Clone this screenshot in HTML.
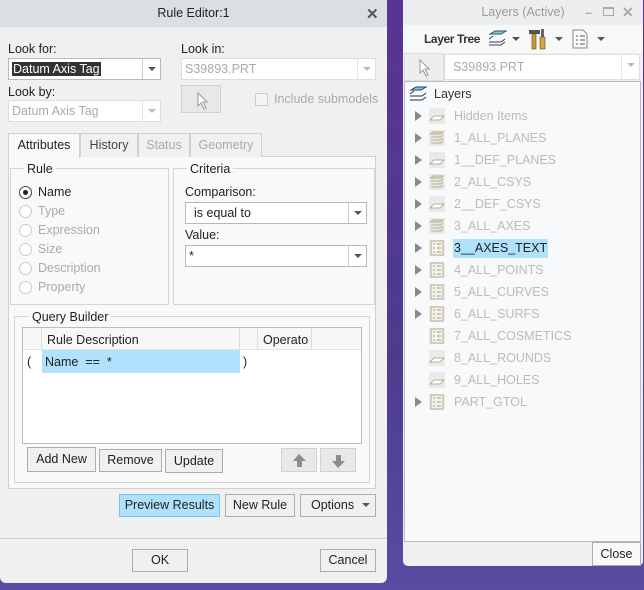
<!DOCTYPE html>
<html><head><meta charset="utf-8"><style>
*{box-sizing:border-box;margin:0;padding:0}
body{width:644px;height:590px;overflow:hidden;position:relative;font-family:"Liberation Sans",sans-serif;font-size:12px;color:#222;background:linear-gradient(180deg,#5a3494 0%,#4d3c8e 60%,#5a4ba2 100%)}
.a{position:absolute;white-space:nowrap}
.dlg{left:0;top:0;width:387px;height:583px;background:#f0f0f0;border-radius:0 0 6px 6px}
.tb{left:0;top:0;width:387px;height:27px;background:#dcdfe1;text-align:center;line-height:27px;font-size:12.5px}
.lbl{font-size:12.5px}
.combo{background:#fff;border:1px solid #b8b8b8;height:22px;line-height:20px;padding-left:3px;font-size:12.5px}
.combo.dis{color:#aaa;border-color:#ddd}
.dd{position:absolute;right:0;top:0;width:18px;height:100%;border-left:1px solid #ccc}
.dd:after{content:"";position:absolute;left:5px;top:8px;border:4px solid transparent;border-top:4px solid #555}
.dis .dd{border-left-color:#e5e5e5}.dis .dd:after{border-top-color:#bbb}
.btn{background:#f0f0f0;border:1px solid #adadad;text-align:center;font-size:12.5px}
.grp{border:1px solid #d5d5d5}
.leg{background:#f9f9f9;padding:0 3px;font-size:12.5px}
.rad{width:13px;height:13px;border-radius:50%;border:1px solid #ccc;background:#fff}
.rt{font-size:12.5px;color:#aaa}
.tab{top:133px;height:24px;border:1px solid #d0d0d0;border-bottom:none;text-align:center;line-height:23px;font-size:12.5px;background:#f0f0f0}
.row{left:410px;width:220px;height:22px;line-height:22px;font-size:12.5px;color:#bbb}
.tri{position:absolute;left:5px;top:6px;border:5px solid transparent;border-left:7px solid #888}
.ic{position:absolute;left:19px;top:3px;width:16px;height:16px;background:#eaeaea}
.tx{position:absolute;left:44px;top:0}
</style></head><body>
<div class="a dlg"></div>
<div class="a tb">Rule Editor:1</div>
<div class="a" style="left:366px;top:5px;font-size:15px;font-weight:bold;color:#555">✕</div>

<div class="a lbl" style="left:8px;top:42px">Look for:</div>
<div class="a combo" style="left:8px;top:58px;width:153px"><span style="background:#333;color:#fff;padding:0 1px">Datum Axis Tag</span><div class="dd"></div></div>
<div class="a lbl" style="left:181px;top:42px">Look in:</div>
<div class="a combo dis" style="left:181px;top:58px;width:195px">S39893.PRT<div class="dd"></div></div>
<div class="a lbl" style="left:8px;top:85px">Look by:</div>
<div class="a combo dis" style="left:8px;top:100px;width:153px">Datum Axis Tag<div class="dd"></div></div>
<div class="a" style="left:181px;top:85px;width:40px;height:28px;background:#e8e8e8;border:1px solid #d0d0d0"><svg width="40" height="28"><path d="M16 7 L16 20 L19 17 L22 23 L24 22 L21 16 L25 16 Z" fill="#fff" stroke="#999"/></svg></div>
<div class="a" style="left:255px;top:93px;width:13px;height:13px;border:1px solid #ccc;background:#f5f5f5"></div>
<div class="a rt" style="left:274px;top:92px">Include submodels</div>

<div class="a" style="left:8px;top:156px;width:368px;height:333px;background:#f9f9f9;border:1px solid #d0d0d0"></div>
<div class="a tab" style="left:8px;width:72px;height:25px;background:#f9f9f9;color:#222">Attributes</div>
<div class="a tab" style="left:80px;width:58px;color:#444">History</div>
<div class="a tab" style="left:138px;width:52px;color:#aaa">Status</div>
<div class="a tab" style="left:190px;width:72px;color:#aaa">Geometry</div>

<div class="a grp" style="left:10px;top:168px;width:159px;height:137px"></div>
<div class="a leg" style="left:24px;top:162px">Rule</div>
<div class="a rad" style="left:19px;top:186px;border-color:#444"><div style="width:5px;height:5px;background:#222;border-radius:50%;margin:3px"></div></div>
<div class="a lbl" style="left:38px;top:185px">Name</div>
<div class="a rad" style="left:19px;top:205px"></div><div class="a rt" style="left:38px;top:204px">Type</div>
<div class="a rad" style="left:19px;top:224px"></div><div class="a rt" style="left:38px;top:223px">Expression</div>
<div class="a rad" style="left:19px;top:243px"></div><div class="a rt" style="left:38px;top:242px">Size</div>
<div class="a rad" style="left:19px;top:262px"></div><div class="a rt" style="left:38px;top:261px">Description</div>
<div class="a rad" style="left:19px;top:281px"></div><div class="a rt" style="left:38px;top:280px">Property</div>

<div class="a grp" style="left:173px;top:168px;width:202px;height:137px"></div>
<div class="a leg" style="left:187px;top:162px">Criteria</div>
<div class="a lbl" style="left:185px;top:185px">Comparison:</div>
<div class="a combo" style="left:185px;top:202px;width:182px;padding-left:8px">is equal to<div class="dd"></div></div>
<div class="a lbl" style="left:185px;top:228px">Value:</div>
<div class="a combo" style="left:185px;top:245px;width:182px">*<div class="dd"></div></div>

<div class="a grp" style="left:14px;top:316px;width:356px;height:167px"></div>
<div class="a leg" style="left:29px;top:310px">Query Builder</div>
<div class="a" style="left:22px;top:327px;width:340px;height:117px;background:#fff;border:1px solid #bbb"></div>
<div class="a" style="left:23px;top:328px;width:338px;height:22px;background:#f7f7f7;border-bottom:1px solid #e5e5e5"></div>
<div class="a" style="left:41px;top:328px;width:1px;height:22px;background:#ddd"></div>
<div class="a" style="left:239px;top:328px;width:1px;height:22px;background:#ddd"></div>
<div class="a" style="left:257px;top:328px;width:1px;height:22px;background:#ddd"></div>
<div class="a" style="left:311px;top:328px;width:1px;height:22px;background:#ddd"></div>
<div class="a lbl" style="left:47px;top:333px">Rule Description</div>
<div class="a lbl" style="left:263px;top:333px;width:45px;overflow:hidden">Operator</div>
<div class="a lbl" style="left:27px;top:355px">(</div>
<div class="a" style="left:42px;top:350px;width:198px;height:23px;background:#b0e2fd"></div>
<div class="a lbl" style="left:45px;top:355px;white-space:pre">Name  ==  *</div>
<div class="a lbl" style="left:243px;top:355px">)</div>

<div class="a btn" style="left:27px;top:447px;width:69px;height:25px;line-height:23px">Add New</div>
<div class="a btn" style="left:99px;top:449px;width:63px;height:23px;line-height:21px">Remove</div>
<div class="a btn" style="left:165px;top:449px;width:58px;height:24px;line-height:22px">Update</div>
<div class="a" style="left:281px;top:448px;width:36px;height:24px;background:#e8e8e8;border:1px solid #d0d0d0"><svg width="36" height="24"><path d="M17 5 L11 12 L15 12 L15 18 L20 18 L20 12 L24 12 Z" fill="#8c8c8c"/></svg></div>
<div class="a" style="left:320px;top:448px;width:36px;height:24px;background:#e8e8e8;border:1px solid #d0d0d0"><svg width="36" height="24"><path d="M17 19 L11 12 L15 12 L15 6 L20 6 L20 12 L24 12 Z" fill="#8c8c8c"/></svg></div>

<div class="a btn" style="left:119px;top:494px;width:101px;height:23px;line-height:21px;background:#b0e0fb;border-color:#6ec6f1">Preview Results</div>
<div class="a btn" style="left:225px;top:494px;width:70px;height:23px;line-height:21px">New Rule</div>
<div class="a btn" style="left:300px;top:494px;width:76px;height:23px;line-height:21px;text-align:left;padding-left:10px">Options<div class="dd" style="border:none"></div></div>
<div class="a" style="left:0;top:538px;width:387px;height:1px;background:#d0d0d0"></div>
<div class="a btn" style="left:132px;top:549px;width:56px;height:23px;line-height:21px">OK</div>
<div class="a btn" style="left:320px;top:549px;width:56px;height:23px;line-height:21px">Cancel</div>

<!-- Layers panel -->
<div class="a" style="left:403px;top:0;width:240px;height:566px;background:#f0f0f0;border-radius:0 0 5px 5px"></div>
<div class="a" style="left:403px;top:0;width:240px;height:25px;background:#eceef0;text-align:center;line-height:25px;color:#999;font-size:12.5px">Layers (Active)</div>
<div class="a" style="left:585px;top:5px;color:#aaa;font-size:13px;font-weight:bold">–</div>
<div class="a" style="left:603px;top:7px;width:11px;height:9px;border:1px solid #aaa;border-top-width:2px"></div>
<div class="a" style="left:622px;top:4px;color:#aaa;font-size:14px;font-weight:bold">✕</div>
<div class="a" style="left:403px;top:25px;width:240px;height:28px;background:#f7f8f9"></div>
<div class="a" style="left:424px;top:32px;font-weight:bold;font-size:12px;letter-spacing:-0.4px;color:#333">Layer Tree</div>
<svg class="a" style="left:487px;top:30px" width="20" height="18"><path d="M3 4 L8 1 L19 1 L14 4 Z" fill="#7cc8e8" stroke="#356"/><path d="M2 9 L6 6 M2 12 L14 12 L18 9 M2 15 L14 15 L18 12" stroke="#345" fill="none"/></svg>
<div class="a" style="left:512px;top:37px;border:4px solid transparent;border-top:4px solid #555"></div>
<svg class="a" style="left:528px;top:28px" width="20" height="22"><rect x="1" y="2" width="11" height="4" fill="#555"/><rect x="4" y="6" width="4" height="15" fill="#c89a40" stroke="#6a4a10" stroke-width=".6"/><rect x="13" y="1" width="3" height="8" fill="#666"/><rect x="12" y="9" width="5" height="12" fill="#d4a548" stroke="#6a4a10" stroke-width=".6"/></svg>
<div class="a" style="left:555px;top:37px;border:4px solid transparent;border-top:4px solid #555"></div>
<svg class="a" style="left:571px;top:29px" width="18" height="20"><path d="M2 1 L12 1 L16 5 L16 19 L2 19 Z" fill="#fafafa" stroke="#888"/><path d="M5 7h2M9 7h5M5 11h2M9 11h5M5 15h2M9 15h5" stroke="#555"/></svg>
<div class="a" style="left:597px;top:37px;border:4px solid transparent;border-top:4px solid #555"></div>

<div class="a" style="left:404px;top:53px;width:40px;height:28px;background:#eee;border:1px solid #ddd"><svg width="40" height="28"><path d="M15 6 L15 19 L18 16 L21 22 L23 21 L20 15 L24 15 Z" fill="#fff" stroke="#999"/></svg></div>
<div class="a combo dis" style="left:444px;top:54px;width:196px;height:26px;line-height:24px;padding-left:8px">S39893.PRT<div class="dd"></div></div>

<div class="a" style="left:404px;top:81px;width:237px;height:461px;background:#f8f9fa;border:1px solid #bbb"></div>
<svg class="a" style="left:409px;top:86px" width="18" height="16"><path d="M2 4 L7 1 L17 1 L12 4 Z" fill="#7cc8e8" stroke="#246"/><path d="M1 8 L5 5 M1 10 L13 10 L17 7 M1 14 L13 14 L17 11" stroke="#234" fill="none"/></svg>
<div class="a" style="left:434px;top:87px;font-size:12.5px;color:#333">Layers</div>

<div class="a row" style="top:105px"><div class="tri"></div><div class="ic"><svg width="16" height="16"><path d="M1 12 L5 8 L15 8 L11 12 Z" fill="#fff" stroke="#b5ae92"/></svg></div><div class="tx">Hidden Items</div></div>
<div class="a row" style="top:127px"><div class="tri"></div><div class="ic"><svg width="16" height="16"><path d="M2 4h10l2-2H4zM2 7h10l2-2M2 10h10l2-2M2 13h10l2-2" stroke="#b5ae92" fill="#e6e2d0"/></svg></div><div class="tx">1_ALL_PLANES</div></div>
<div class="a row" style="top:149px"><div class="tri"></div><div class="ic"><svg width="16" height="16"><path d="M1 12 L5 8 L15 8 L11 12 Z" fill="#fff" stroke="#b5ae92"/></svg></div><div class="tx">1__DEF_PLANES</div></div>
<div class="a row" style="top:171px"><div class="tri"></div><div class="ic"><svg width="16" height="16"><path d="M2 4h10l2-2H4zM2 7h10l2-2M2 10h10l2-2M2 13h10l2-2" stroke="#b5ae92" fill="#e6e2d0"/></svg></div><div class="tx">2_ALL_CSYS</div></div>
<div class="a row" style="top:193px"><div class="tri"></div><div class="ic"><svg width="16" height="16"><path d="M1 12 L5 8 L15 8 L11 12 Z" fill="#fff" stroke="#b5ae92"/></svg></div><div class="tx">2__DEF_CSYS</div></div>
<div class="a row" style="top:215px"><div class="tri"></div><div class="ic"><svg width="16" height="16"><path d="M2 4h10l2-2H4zM2 7h10l2-2M2 10h10l2-2M2 13h10l2-2" stroke="#b5ae92" fill="#e6e2d0"/></svg></div><div class="tx">3_ALL_AXES</div></div>
<div class="a row" style="top:237px"><div class="tri"></div><div class="ic"><svg width="16" height="16"><path d="M2 1h12v14H2z" fill="#f4f2ea" stroke="#b5ae92"/><path d="M4 4h2M8 4h4M4 8h2M8 8h4M4 12h2M8 12h4" stroke="#a59e80"/></svg></div><div class="tx" style="background:#b0e2fd;color:#222;padding:0 1px;line-height:19px;top:2px;left:43px">3__AXES_TEXT</div></div>
<div class="a row" style="top:259px"><div class="tri"></div><div class="ic"><svg width="16" height="16"><path d="M2 1h12v14H2z" fill="#f4f2ea" stroke="#b5ae92"/><path d="M4 4h2M8 4h4M4 8h2M8 8h4M4 12h2M8 12h4" stroke="#a59e80"/></svg></div><div class="tx">4_ALL_POINTS</div></div>
<div class="a row" style="top:281px"><div class="tri"></div><div class="ic"><svg width="16" height="16"><path d="M2 1h12v14H2z" fill="#f4f2ea" stroke="#b5ae92"/><path d="M4 4h2M8 4h4M4 8h2M8 8h4M4 12h2M8 12h4" stroke="#a59e80"/></svg></div><div class="tx">5_ALL_CURVES</div></div>
<div class="a row" style="top:303px"><div class="tri"></div><div class="ic"><svg width="16" height="16"><path d="M2 1h12v14H2z" fill="#f4f2ea" stroke="#b5ae92"/><path d="M4 4h2M8 4h4M4 8h2M8 8h4M4 12h2M8 12h4" stroke="#a59e80"/></svg></div><div class="tx">6_ALL_SURFS</div></div>
<div class="a row" style="top:325px"><div class="ic"><svg width="16" height="16"><path d="M2 1h12v14H2z" fill="#f4f2ea" stroke="#b5ae92"/><path d="M4 4h2M8 4h4M4 8h2M8 8h4M4 12h2M8 12h4" stroke="#a59e80"/></svg></div><div class="tx">7_ALL_COSMETICS</div></div>
<div class="a row" style="top:347px"><div class="ic"><svg width="16" height="16"><path d="M1 12 L5 8 L15 8 L11 12 Z" fill="#fff" stroke="#b5ae92"/></svg></div><div class="tx">8_ALL_ROUNDS</div></div>
<div class="a row" style="top:369px"><div class="ic"><svg width="16" height="16"><path d="M1 12 L5 8 L15 8 L11 12 Z" fill="#fff" stroke="#b5ae92"/></svg></div><div class="tx">9_ALL_HOLES</div></div>
<div class="a row" style="top:391px"><div class="tri"></div><div class="ic"><svg width="16" height="16"><path d="M2 1h12v14H2z" fill="#f4f2ea" stroke="#b5ae92"/><path d="M4 4h2M8 4h4M4 8h2M8 8h4M4 12h2M8 12h4" stroke="#a59e80"/></svg></div><div class="tx">PART_GTOL</div></div>

<div class="a btn" style="left:592px;top:542px;width:49px;height:24px;line-height:22px;background:#fafafa">Close</div>
</body></html>
